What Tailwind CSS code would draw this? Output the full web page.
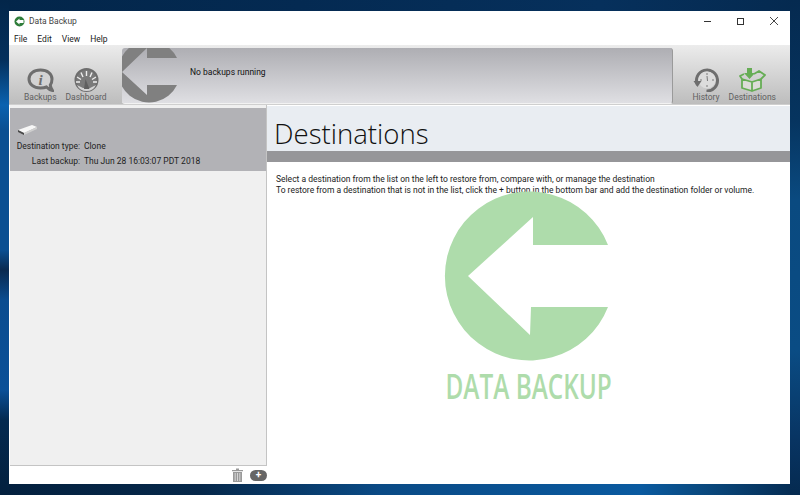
<!DOCTYPE html>
<html lang="en">
<head>
    <meta charset="UTF-8">
    <title>Data Backup</title>
    <script src="https://cdn.jsdelivr.net/npm/@tailwindcss/browser@4"></script>
</head>
<body class="w-[800px] h-[495px] overflow-hidden bg-[#052c55] bg-no-repeat bg-[image:linear-gradient(180deg,#03264a_0,#04305c_60px,#0a62b0_105px,#0a4f92_130px,#0a4f92_250px,#0a2a50_270px,#0b4d90_300px,#0b5098_390px,#042a50_420px,#03203e_495px),linear-gradient(180deg,#052a50_0,#06345f_120px,#0a4a80_200px,#0a4c84_350px,#083462_440px,#052a50_495px),linear-gradient(90deg,#03203e_0,#06284a_200px,#0a4a85_380px,#0a5aa0_640px,#0a4a80_700px,#052a50_800px),linear-gradient(90deg,#03264a_0,#042a52_300px,#06305c_600px,#052a50_800px)] bg-[length:9px_100%,10px_100%,100%_11px,100%_11px] bg-[position:0_0,100%_0,0_100%,0_0] font-['Roboto','Open_Sans',sans-serif] text-[#1a1a1a]">
    <div class="ml-[9px] mt-[11px] w-[781px] h-[473px] bg-white flex flex-col overflow-hidden">

        <!-- Title bar -->
        <div class="h-[20px] flex items-center shrink-0 pl-[5px]">
            <svg class="w-[11px] h-[11px]" viewBox="0 0 22 22">
                <circle cx="11" cy="11" r="10" fill="#2f7d3a"/>
                <path d="M19 8H11V5L4 11L11 17V14H19Z" fill="#fff"/>
            </svg>
            <span class="ml-[4px] mt-px text-[8.5px] text-[#444]">Data Backup</span>
            <div class="ml-auto flex items-center">
                <span class="w-[33px] flex justify-center"><span class="w-[7px] h-px bg-[#333]"></span></span>
                <span class="w-[33px] flex justify-center"><span class="w-[7px] h-[7px] border border-[#333]"></span></span>
                <span class="w-[33px] flex justify-center">
                    <svg class="w-[8px] h-[8px]" viewBox="0 0 8 8"><path d="M0 0L8 8M8 0L0 8" stroke="#333" stroke-width="0.9"/></svg>
                </span>
            </div>
        </div>

        <!-- Menu -->
        <div class="h-[14px] flex items-center shrink-0 gap-[10px] pl-[5px] pt-[2px] text-[8.5px]">
            <span>File</span><span>Edit</span><span>View</span><span>Help</span>
        </div>

        <!-- Toolbar -->
        <div class="h-[60px] shrink-0 flex bg-gradient-to-b from-[#ececec] to-[#bdbdbd] border-b border-[#cfcfcf]">
            <div class="w-[113px] shrink-0 flex items-end pl-[15px] gap-[9px] pb-[1px] text-[8.5px] text-[#5f5f5f]">
                <div class="flex flex-col items-center">
                    <svg class="w-[27px] h-[24px]" viewBox="0 0 27 24">
                        <path d="M13.5 2C6.5 2 2 5.8 2 11S6.5 20 13.5 20C16 20 18 19.6 19.5 19C21 20.6 23 22 25.5 22.5C24 21 23.5 19.2 23.3 17C24.4 15.4 25 13.4 25 11C25 5.8 20.5 2 13.5 2Z" fill="#d3d3d3" stroke="#6e6e6e" stroke-width="3"/>
                        <text x="13.5" y="17" text-anchor="middle" font-family="Liberation Serif" font-size="15" font-weight="700" font-style="italic" fill="#6e6e6e">i</text>
                    </svg>
                    <span class="leading-[11px]">Backups</span>
                </div>
                <div class="flex flex-col items-center">
                    <svg class="w-[27px] h-[24px]" viewBox="0 0 27 24">
                        <circle cx="13.5" cy="12" r="11" fill="#7a7a7a" stroke="#6e6e6e" stroke-width="2"/>
                        <path d="M4 17A10.5 10.5 0 0 0 23 17L17 20H10Z" fill="#d4d4d4"/>
                        <path d="M13.5 3V8M8 4.5L10 9M19 4.5L17 9M4 9L8 11.5M23 9L19 11.5M3 14H7M24 14H20" stroke="#eeeeee" stroke-width="1.4"/>
                        <path d="M11 21L12.5 11L16.5 21Z" fill="#5f5f5f"/>
                    </svg>
                    <span class="leading-[11px]">Dashboard</span>
                </div>
            </div>

            <!-- Status banner -->
            <div class="relative w-[551px] h-[56px] mt-[3px] shrink-0 rounded-[3px] overflow-hidden flex items-center pl-[68px] bg-gradient-to-b from-[#aeaeb3] to-[#dfdfe3] border-b border-[#f2f2f2] border-r-[#9a9a9a] border-r">
                <svg class="absolute left-0 top-0 w-[60px] h-[56px]" viewBox="0 0 60 56">
                    <path d="M55 10A31 31 0 1 0 55 37L25 37L25 47L0 24L25 0L25 10Z" fill="#808080"/>
                </svg>
                <span class="relative -mt-[7px] text-[8.5px] text-[#111]">No backups running</span>
            </div>

            <div class="flex-1 flex items-end justify-end gap-[9px] pr-[14px] pb-[1px] text-[8.5px] text-[#5f5f5f]">
                <div class="flex flex-col items-center">
                    <svg class="w-[27px] h-[24px]" viewBox="0 0 27 24">
                        <path d="M4.5 17A10.5 10.5 0 1 1 13.5 23" fill="none" stroke="#6e6e6e" stroke-width="3"/>
                        <circle cx="14" cy="12" r="8.5" fill="#dcdcdc"/>
                        <path d="M0.5 13L4.5 19L8.5 13Z" fill="#6e6e6e"/>
                        <path d="M14 5V7M14 17V19M7 12H9M19 12H21M14 8L14.5 13" stroke="#7a7a7a" stroke-width="1"/>
                    </svg>
                    <span class="leading-[11px]">History</span>
                </div>
                <div class="flex flex-col items-center">
                    <svg class="w-[27px] h-[24px]" viewBox="0 0 27 24">
                        <path d="M3 11L13 14L13 23L3 20ZM13 14L22 11L22 20L13 23Z" fill="#dcdcd8" stroke="#66ad55" stroke-width="1.8" stroke-linejoin="round"/>
                        <path d="M3 11L1 8L5 6M22 11L26 7L20 3L15 6" fill="none" stroke="#66ad55" stroke-width="1.8" stroke-linejoin="round"/>
                        <path d="M8 0H13V5H16L10.5 11L5 5H8Z" fill="#66ad55"/>
                    </svg>
                    <span class="leading-[11px]">Destinations</span>
                </div>
            </div>
        </div>

        <!-- Main -->
        <div class="relative flex-1 flex min-h-0">
            <!-- Sidebar -->
            <div class="w-[257px] ml-px shrink-0 flex flex-col">
                <div class="flex-1 bg-[#f0f0f0] pt-[3px] border-b border-r border-[#c4c4c4]">
                    <div class="h-[63px] bg-[#b2b2b6] pt-[16px] text-[8.5px] text-[#222] leading-[15px]">
                        <svg class="ml-[7px] w-[21px] h-[12px]" viewBox="0 0 21 12">
                            <path d="M1 6L15 1L20 3L7 9Z" fill="#f7f7f7"/>
                            <path d="M1 6L7 9L7 11L1 8Z" fill="#4a4a4a"/>
                            <path d="M7 9L20 3V5L7 11Z" fill="#cfcfcf"/>
                        </svg>
                        <div class="grid grid-cols-[70px_1fr] gap-x-[4px] mt-[3px]">
                            <span class="text-right">Destination type:</span><span>Clone</span>
                            <span class="text-right">Last backup:</span><span>Thu Jun 28 16:03:07 PDT 2018</span>
                        </div>
                    </div>
                </div>
                <div class="h-[18px] shrink-0 flex items-center justify-end gap-[7px] bg-white">
                    <svg class="w-[11px] h-[14px]" viewBox="0 0 11 14">
                        <path d="M0 2H11V3.2H0ZM4 0.5H7V2H4Z" fill="#9a9a9a"/>
                        <path d="M1 4H10V14H1Z" fill="#9a9a9a"/>
                        <path d="M3.2 5V13M5.5 5V13M7.8 5V13" stroke="#e6e6e6" stroke-width="0.8"/>
                    </svg>
                    <span class="w-[17px] h-[11px] rounded-full bg-[#666] text-white text-[10px] leading-[10px] text-center font-bold">+</span>
                </div>
            </div>

            <!-- Content -->
            <div class="relative flex-1 min-w-0">
                <div class="h-[45px] bg-[#e9edf2] pl-[7px] pt-[7px] text-[27.6px] font-light leading-[41px] text-[#111] mt-px font-['Open_Sans',sans-serif]">Destinations</div>
                <div class="h-[11px] bg-[#969699]"></div>
                <div class="relative pl-[9px] pt-[12px] text-[8.5px] leading-[10.5px] text-[#222]">
                    <p>Select a destination from the list on the left to restore from, compare with, or manage the destination</p>
                    <p>To restore from a destination that is not in the list, click the + button in the bottom bar and add the destination folder or volume.</p>
                </div>
                <!-- Watermark -->
                <div class="absolute left-[177px] top-[86px] w-[170px] flex flex-col items-center">
                    <svg class="w-[170px] h-[170px]" viewBox="0 0 170 170">
                        <path d="M164 54A84.5 84.5 0 1 0 164 116L87 116L86 144L24 85L89 26L89 54Z" fill="#aedcab"/>
                    </svg>
                    <span class="mt-[6px] inline-block scale-x-[.725] text-[33.6px] leading-[38px] font-semibold text-[#aedcab] whitespace-nowrap font-['Open_Sans',sans-serif]">DATA BACKUP</span>
                </div>
            </div>
        </div>
    </div>
</body>
</html>
